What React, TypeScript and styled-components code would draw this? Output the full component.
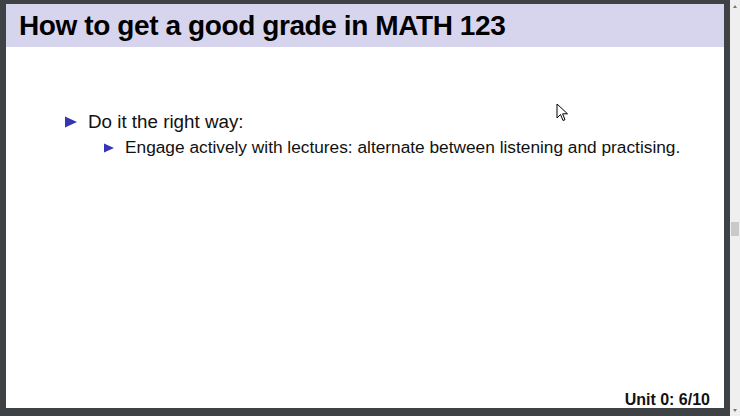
import styled, { createGlobalStyle } from 'styled-components';

const GlobalStyle = createGlobalStyle`
  html, body {
    margin: 0;
    padding: 0;
    background: #3f4244;
    font-family: "Liberation Sans", Arial, sans-serif;
  }
`;

const Screen = styled.div`
  width: 740px;
  height: 416px;
  display: flex;
  background: #3f4244;
  overflow: hidden;
`;

const Viewer = styled.div`
  flex: 1;
  padding: 4px 6px 8px 6px;
  display: flex;
`;

const Slide = styled.div`
  flex: 1;
  background: #ffffff;
  display: flex;
  flex-direction: column;
`;

const Header = styled.div`
  height: 43px;
  background: #d7d5ee;
  display: flex;
  align-items: center;
  padding-left: 13px;
`;

const Title = styled.h1`
  margin: 0;
  font-size: 28px;
  font-weight: 700;
  color: #000;
  letter-spacing: -0.4px;
`;

const Body = styled.div`
  flex: 1;
  padding: 62px 0 0 59px;
`;

const List = styled.ul`
  list-style: none;
  margin: 0;
  padding: 0;
`;

const Item = styled.li<{ $level: number }>`
  display: flex;
  align-items: center;
  gap: 11px;
  font-size: ${({ $level }) => ($level === 1 ? 18.8 : 17.3)}px;
  line-height: ${({ $level }) => ($level === 1 ? 25 : 27)}px;
  color: #111;
  padding-left: ${({ $level }) => ($level === 1 ? 0 : 39)}px;
`;

const Bullet = styled.svg<{ $size: number }>`
  width: ${({ $size }) => $size}px;
  height: ${({ $size }) => $size}px;
  flex: none;
`;

const Footer = styled.div`
  display: flex;
  justify-content: flex-end;
  padding: 0 14px 0 0;
  font-size: 16px;
  font-weight: 700;
  color: #111;
  line-height: 16px;
`;

const Scrollbar = styled.div`
  width: 10px;
  background: #efefef;
  display: flex;
  flex-direction: column;
  align-items: center;
  justify-content: space-between;
  padding: 5px 0 4px;
  position: relative;
`;

const Arrow = styled.div<{ $up?: boolean }>`
  width: 0;
  height: 0;
  border-left: 2px solid transparent;
  border-right: 2px solid transparent;
  ${({ $up }) => ($up ? 'border-bottom: 3px solid #777;' : 'border-top: 3px solid #777;')}
`;

const Thumb = styled.div`
  position: absolute;
  top: 222px;
  left: 1px;
  width: 8px;
  height: 14px;
  background: #c9c9c9;
`;

const Cursor = styled.svg`
  position: absolute;
  left: 556px;
  top: 103px;
  width: 13px;
  height: 19px;
`;

const Triangle = ({ size }: { size: number }) => (
  <Bullet $size={size} viewBox="0 0 10 10">
    <polygon points="0,0.5 10,5 0,9.5" fill="#3434b4" />
  </Bullet>
);

export default function App() {
  return (
    <>
      <GlobalStyle />
      <Screen>
        <Viewer>
          <Slide>
            <Header>
              <Title>How to get a good grade in MATH 123</Title>
            </Header>
            <Body>
              <List>
                <Item $level={1}>
                  <Triangle size={12} />
                  Do it the right way:
                </Item>
                <Item $level={2}>
                  <Triangle size={10} />
                  Engage actively with lectures: alternate between listening and practising.
                </Item>
              </List>
            </Body>
            <Footer>Unit 0: 6/10</Footer>
          </Slide>
        </Viewer>
        <Scrollbar>
          <Arrow $up />
          <Thumb />
          <Arrow />
        </Scrollbar>
      </Screen>
      <Cursor viewBox="0 0 13 19">
        <path d="M1 1 L1 15 L4.5 11.5 L7 17.5 L9 16.7 L6.6 10.8 L11.5 10.8 Z" fill="#fff" stroke="#000" strokeWidth="1" strokeLinejoin="round" />
      </Cursor>
    </>
  );
}
